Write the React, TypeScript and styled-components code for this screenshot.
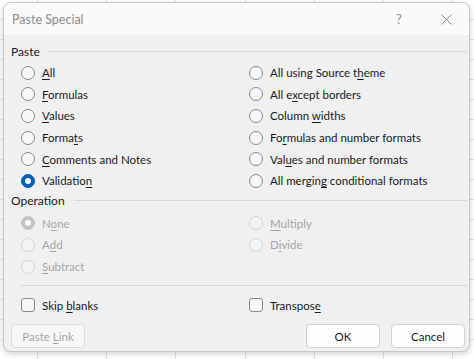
import React from 'react';
import styled, { createGlobalStyle } from 'styled-components';

const GlobalStyle = createGlobalStyle`
  html, body {
    margin: 0;
    padding: 0;
  }
  body {
    width: 474px;
    height: 359px;
    overflow: hidden;
    font-family: 'Segoe UI', Lato, 'Noto Sans', sans-serif;
    background-color: #ffffff;
    background-image:
      repeating-linear-gradient(90deg, transparent 0, transparent 37px, #e2e2e2 37px, #e2e2e2 38px, transparent 38px, transparent 69.2px),
      repeating-linear-gradient(0deg, transparent 0, transparent 19px, #e2e2e2 19px, #e2e2e2 20px);
  }
`;

const Dialog = styled.div`
  margin: 2px 0 0 3px;
  width: 467px;
  height: 350px;
  box-sizing: border-box;
  border: 1px solid #c8c8c8;
  border-radius: 8px;
  background: #f0f0f0;
  box-shadow: 0 2px 6px rgba(0, 0, 0, 0.18);
  overflow: hidden;
  display: flex;
  flex-direction: column;
`;

const TitleBar = styled.div`
  height: 32px;
  flex: none;
  background: #fafafa;
  display: flex;
  align-items: center;
  padding-left: 8px;
  color: #8c8c8c;
  font-size: 12.5px;
`;

const Title = styled.div`
  flex: 1;
`;

const TitleButton = styled.div<{ $w: number }>`
  width: ${p => p.$w}px;
  height: 32px;
  display: flex;
  align-items: center;
  justify-content: center;
  color: #8c8c8c;
  font-size: 13px;
`;

const Body = styled.div`
  flex: 1;
  display: flex;
  flex-direction: column;
  padding: 8px 2px 0 7px;
`;

const GroupHeader = styled.div<{ $top?: number }>`
  display: flex;
  align-items: center;
  gap: 9px;
  height: 16px;
  margin-top: ${p => p.$top ?? 0}px;
  font-size: 12px;
  color: #1a1a1a;
  &::after {
    content: '';
    flex: 1;
    height: 1px;
    background: #d8d8d8;
  }
`;

const OptionGrid = styled.div<{ $top: number; $rows: number }>`
  display: grid;
  grid-template-columns: 228px 1fr;
  grid-template-rows: repeat(${p => p.$rows}, 21.6px);
  grid-auto-flow: column;
  padding-left: 10px;
  margin-top: ${p => p.$top}px;
`;

const Option = styled.label<{ $disabled?: boolean }>`
  display: flex;
  align-items: center;
  gap: 7px;
  font-size: 11.5px;
  color: ${p => (p.$disabled ? '#a6a6a6' : '#1a1a1a')};
  white-space: nowrap;
  u {
    text-decoration-thickness: 1px;
    text-underline-offset: 2px;
  }
`;

const Radio = styled.span<{ $checked?: boolean; $disabled?: boolean }>`
  width: 14px;
  height: 14px;
  box-sizing: border-box;
  border-radius: 50%;
  flex: none;
  position: relative;
  border: 1px solid
    ${p => (p.$checked ? (p.$disabled ? '#c2c2c2' : '#005fb8') : p.$disabled ? '#d4d4d4' : '#8a8a8a')};
  background: ${p => (p.$checked ? (p.$disabled ? '#c2c2c2' : '#005fb8') : p.$disabled ? '#f4f4f4' : '#f7f7f7')};
  &::after {
    content: '';
    display: ${p => (p.$checked ? 'block' : 'none')};
    position: absolute;
    left: 3px;
    top: 3px;
    width: 6px;
    height: 6px;
    border-radius: 50%;
    background: #ffffff;
  }
`;

const Separator = styled.div`
  height: 1px;
  flex: none;
  background: #d6d6d6;
  margin: 8px 0 0 10px;
`;

const CheckRow = styled.div`
  display: grid;
  grid-template-columns: 228px 1fr;
  height: 22px;
  padding-left: 10px;
  margin-top: 8px;
`;

const CheckBox = styled.span`
  width: 14px;
  height: 14px;
  box-sizing: border-box;
  border: 1px solid #8a8a8a;
  border-radius: 3px;
  background: #f7f7f7;
  flex: none;
`;

const ButtonRow = styled.div`
  display: flex;
  align-items: center;
  gap: 11px;
  margin-top: 8px;
`;

const Button = styled.button<{ $disabled?: boolean }>`
  width: 74px;
  height: 24px;
  box-sizing: border-box;
  border: 1px solid ${p => (p.$disabled ? '#dcdcdc' : '#d2d2d2')};
  border-radius: 4px;
  background: ${p => (p.$disabled ? '#f7f7f7' : '#fdfdfd')};
  color: ${p => (p.$disabled ? '#a6a6a6' : '#1a1a1a')};
  font-family: inherit;
  font-size: 11.5px;
  padding: 0;
  u {
    text-underline-offset: 2px;
  }
`;

const Spacer = styled.div`
  flex: 1;
`;

const Label = ({ text, k }: { text: string; k: number }) => (
  <span>
    {text.slice(0, k)}
    <u>{text[k]}</u>
    {text.slice(k + 1)}
  </span>
);

const pasteOptions: [string, number, boolean?][] = [
  ['All', 0],
  ['Formulas', 0],
  ['Values', 0],
  ['Formats', 5],
  ['Comments and Notes', 0],
  ['Validation', 9, true],
  ['All using Source theme', 18],
  ['All except borders', 5],
  ['Column widths', 7],
  ['Formulas and number formats', 2],
  ['Values and number formats', 3],
  ['All merging conditional formats', 10],
];

const operationOptions: [string, number, boolean?][] = [
  ['None', 1, true],
  ['Add', 1],
  ['Subtract', 0],
  ['Multiply', 0],
  ['Divide', 1],
];

export default function App() {
  return (
    <>
      <GlobalStyle />
      <Dialog>
        <TitleBar>
          <Title>Paste Special</Title>
          <TitleButton $w={48}>?</TitleButton>
          <TitleButton $w={46}>
            <svg width="11" height="11" viewBox="0 0 11 11">
              <path d="M0.5 0.5 L10.5 10.5 M10.5 0.5 L0.5 10.5" stroke="#8c8c8c" strokeWidth="1" fill="none" />
            </svg>
          </TitleButton>
        </TitleBar>
        <Body>
          <GroupHeader>Paste</GroupHeader>
          <OptionGrid $top={3} $rows={6}>
            {pasteOptions.map(([t, k, c]) => (
              <Option key={t}>
                <Radio $checked={c} />
                <Label text={t} k={k} />
              </Option>
            ))}
          </OptionGrid>
          <GroupHeader $top={1}>Operation</GroupHeader>
          <OptionGrid $top={4} $rows={3}>
            {operationOptions.map(([t, k, c]) => (
              <Option key={t} $disabled>
                <Radio $checked={c} $disabled />
                <Label text={t} k={k} />
              </Option>
            ))}
          </OptionGrid>
          <Separator />
          <CheckRow>
            <Option>
              <CheckBox />
              <Label text="Skip blanks" k={5} />
            </Option>
            <Option>
              <CheckBox />
              <Label text="Transpose" k={8} />
            </Option>
          </CheckRow>
          <ButtonRow>
            <Button $disabled>
              Paste <u>L</u>ink
            </Button>
            <Spacer />
            <Button>OK</Button>
            <Button style={{ marginRight: 2 }}>Cancel</Button>
          </ButtonRow>
        </Body>
      </Dialog>
    </>
  );
}
